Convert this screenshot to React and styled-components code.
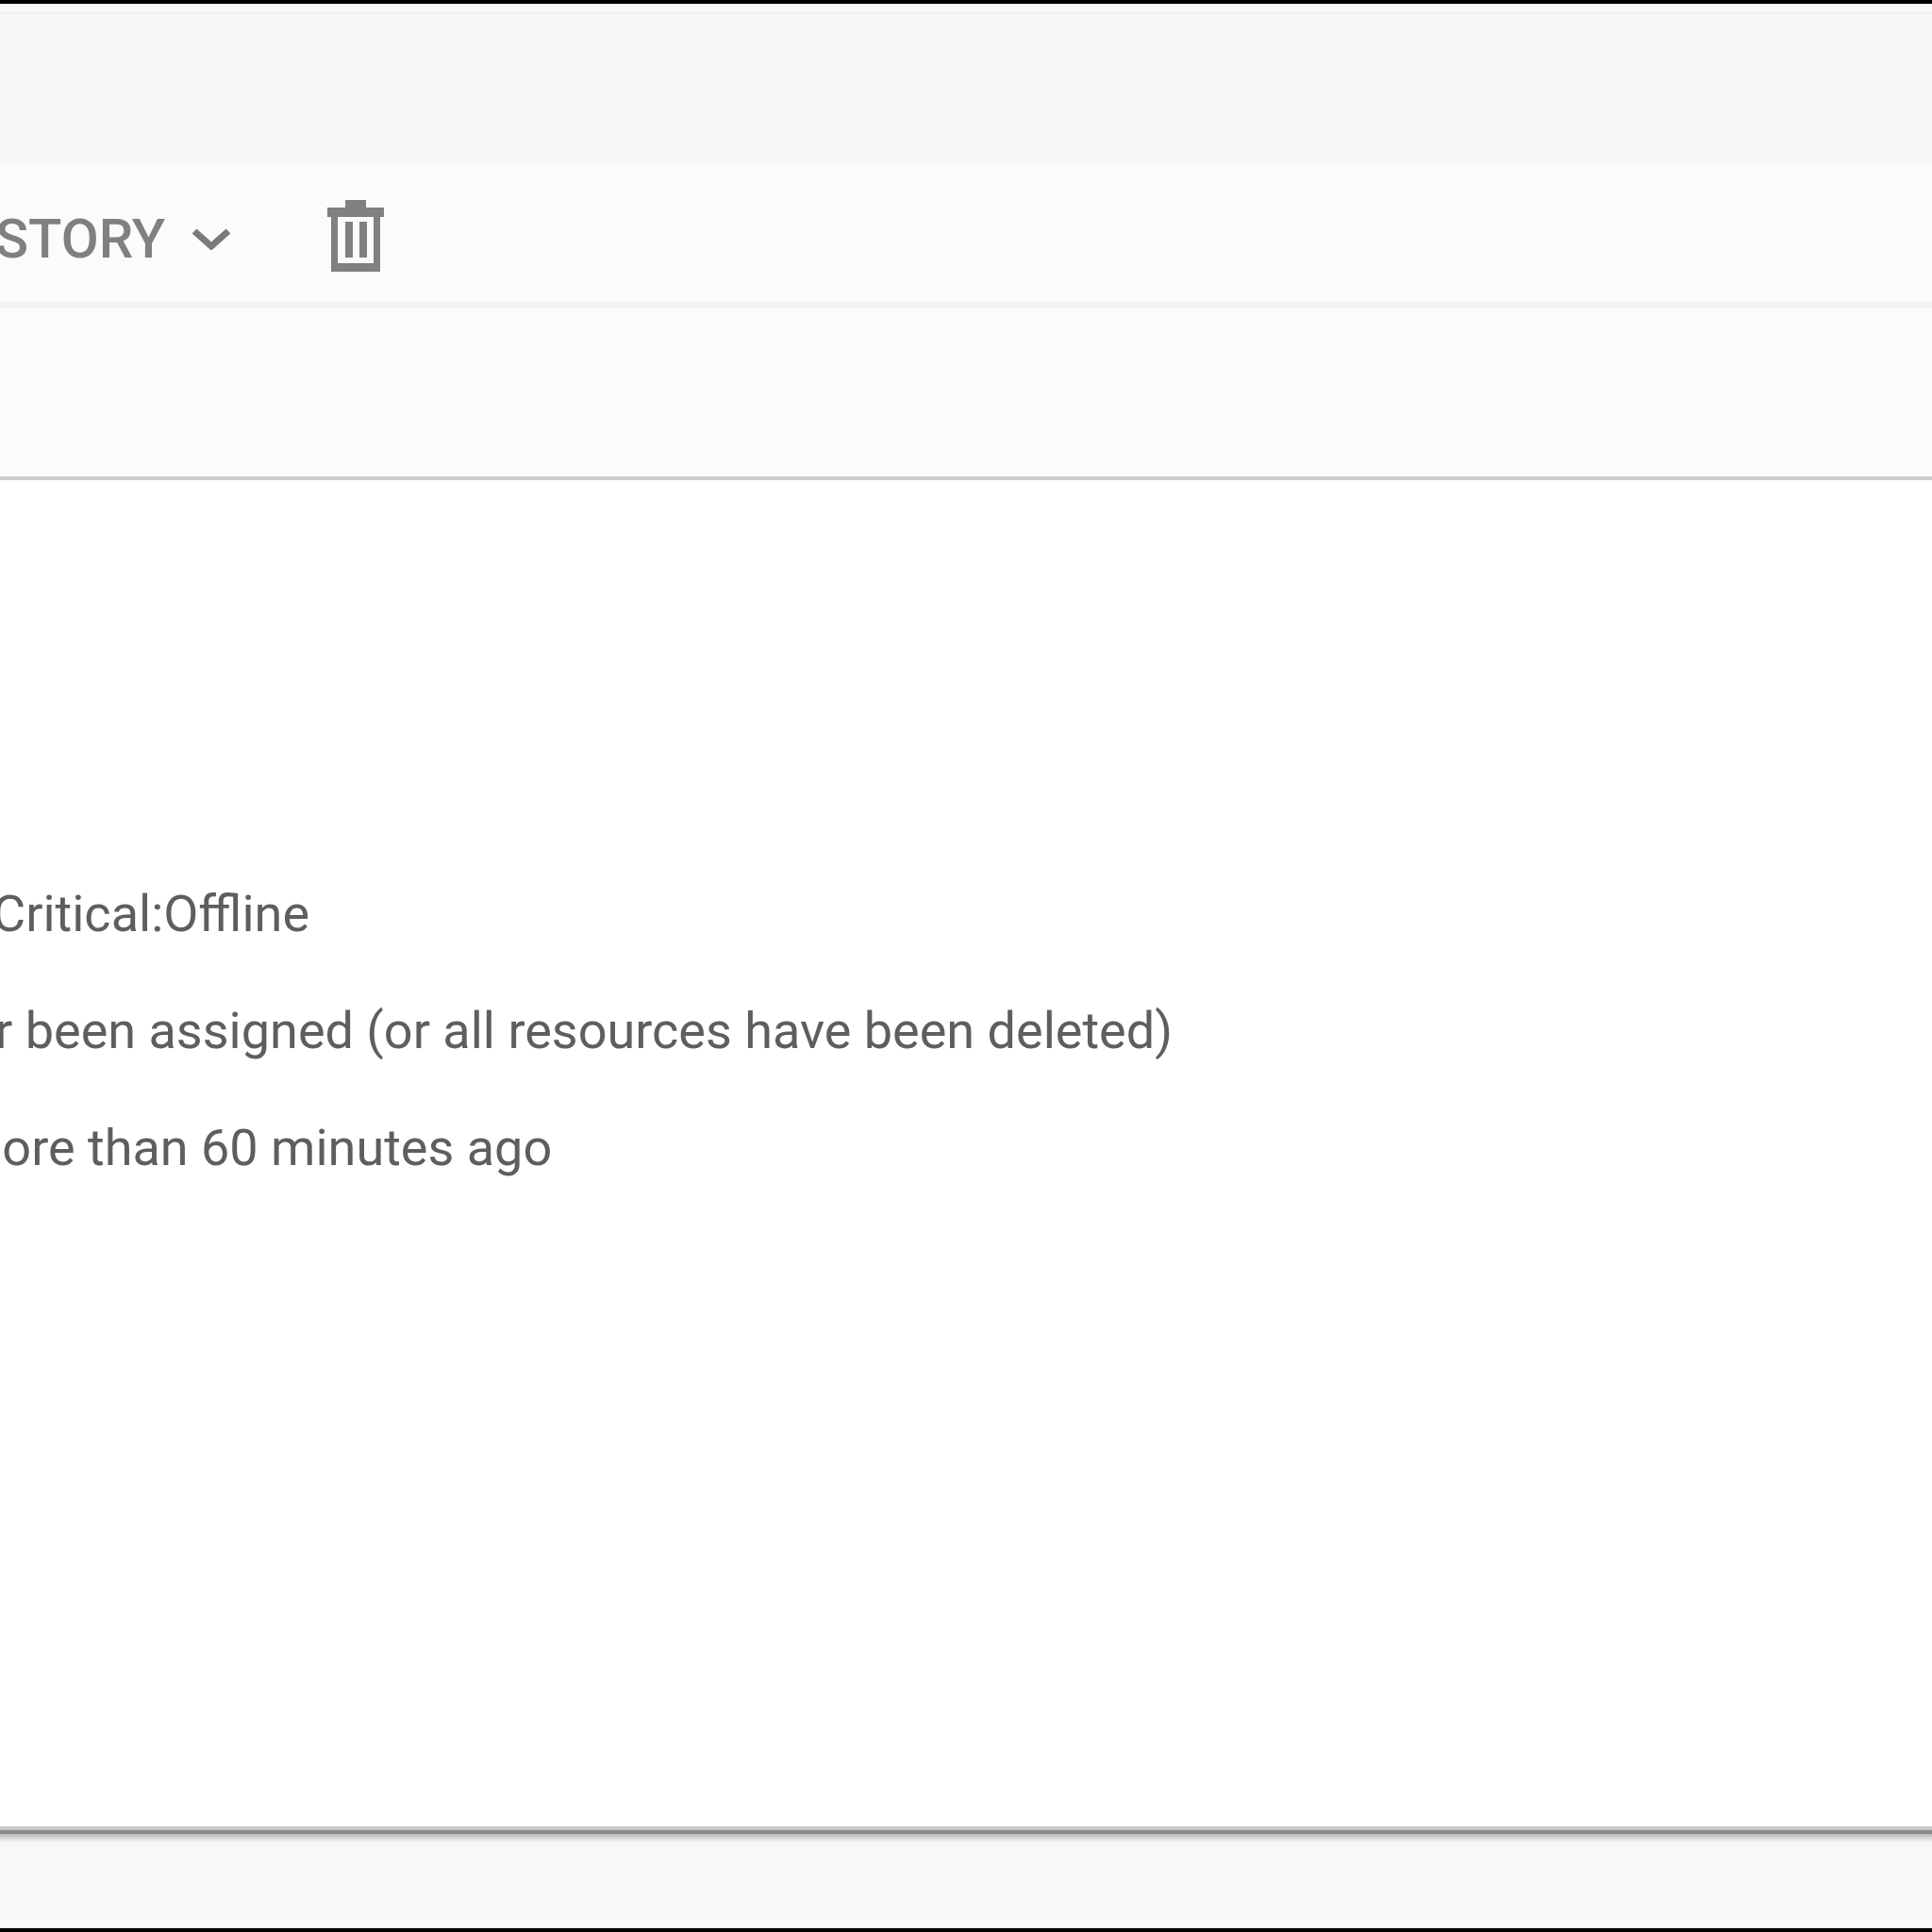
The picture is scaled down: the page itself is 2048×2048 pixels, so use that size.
import React from 'react';
import styled, { createGlobalStyle } from 'styled-components';

const rules = [
  { id: 'critical', text: 'Critical:Offline', shift: -8 },
  { id: 'assigned', text: 'r been assigned (or all resources have been deleted)', shift: -5 },
  { id: 'stale', text: 'more than 60 minutes ago', shift: -45 },
];

export default function App() {
  return (
    <>
      <GlobalStyle />
      <Page>
        <TopBand />
        <Toolbar>
          <HistoryButton>
            <HistoryLabel>STORY</HistoryLabel>
            <svg width="42" height="24" viewBox="0 0 42 24" fill="none">
              <path d="M3 4 L21 20 L39 4" stroke="#7b7b7b" strokeWidth="7" />
            </svg>
          </HistoryButton>
          <TrashButton>
            <svg width="60" height="76" viewBox="0 0 60 76" fill="#808080">
              <path d="M19 0 H41 V8 H60 V18 H56 V76 H4 V18 H0 V8 H19 Z M11 18 V67 H49 V18 Z" fillRule="evenodd" />
              <rect x="19" y="23" width="8" height="38" />
              <rect x="34" y="23" width="8" height="38" />
            </svg>
          </TrashButton>
        </Toolbar>
        <SubHeader />
        <Content>
          {rules.map((rule) => (
            <RuleLine key={rule.id} $shift={rule.shift}>
              {rule.text}
            </RuleLine>
          ))}
        </Content>
        <Footer />
      </Page>
    </>
  );
}

const GlobalStyle = createGlobalStyle`
  html, body {
    margin: 0;
    padding: 0;
    background: #ffffff;
  }
`;

const Page = styled.div`
  width: 2048px;
  height: 2048px;
  display: flex;
  flex-direction: column;
  overflow: hidden;
  border-top: 4px solid #000000;
  border-bottom: 4px solid #000000;
  box-sizing: border-box;
  font-family: Roboto, 'Liberation Sans', sans-serif;
`;

const TopBand = styled.div`
  height: 170px;
  flex: none;
  background: linear-gradient(
    #fafafa 0,
    #fafafa 8px,
    #f0f0f0 9px,
    #f0f0f0 10px,
    #f9f9f9 12px,
    #f6f6f6 16px
  );
`;

const Toolbar = styled.div`
  height: 146px;
  flex: none;
  display: flex;
  align-items: center;
  background: #fbfbfb;
  border-bottom: 7px solid #f2f2f2;
`;

const HistoryButton = styled.div`
  display: flex;
  align-items: center;
  gap: 28px;
  margin-left: -5px;
  margin-top: 12px;
`;

const HistoryLabel = styled.span`
  font-size: 58px;
  font-weight: 500;
  color: #808080;
`;

const TrashButton = styled.div`
  display: flex;
  margin-left: 102px;
  margin-top: 6px;
`;

const SubHeader = styled.div`
  height: 178px;
  flex: none;
  background: #fbfbfb;
  border-bottom: 4px solid #cccccc;
`;

const Content = styled.div`
  flex: 1;
  display: flex;
  flex-direction: column;
  gap: 70px;
  padding-top: 433px;
  background: #ffffff;
  border-bottom: 4px solid #c8c8c8;
`;

const RuleLine = styled.div`
  margin-left: ${(props) => props.$shift}px;
  font-size: 54px;
  line-height: 54px;
  color: #5e5e5e;
  white-space: nowrap;
`;

const Footer = styled.div`
  height: 100px;
  flex: none;
  border-top: 4px solid #888888;
  background: linear-gradient(#b4b4b4 0, #dddddd 5px, #f6f6f6 9px, #fafafa 16px);
`;
